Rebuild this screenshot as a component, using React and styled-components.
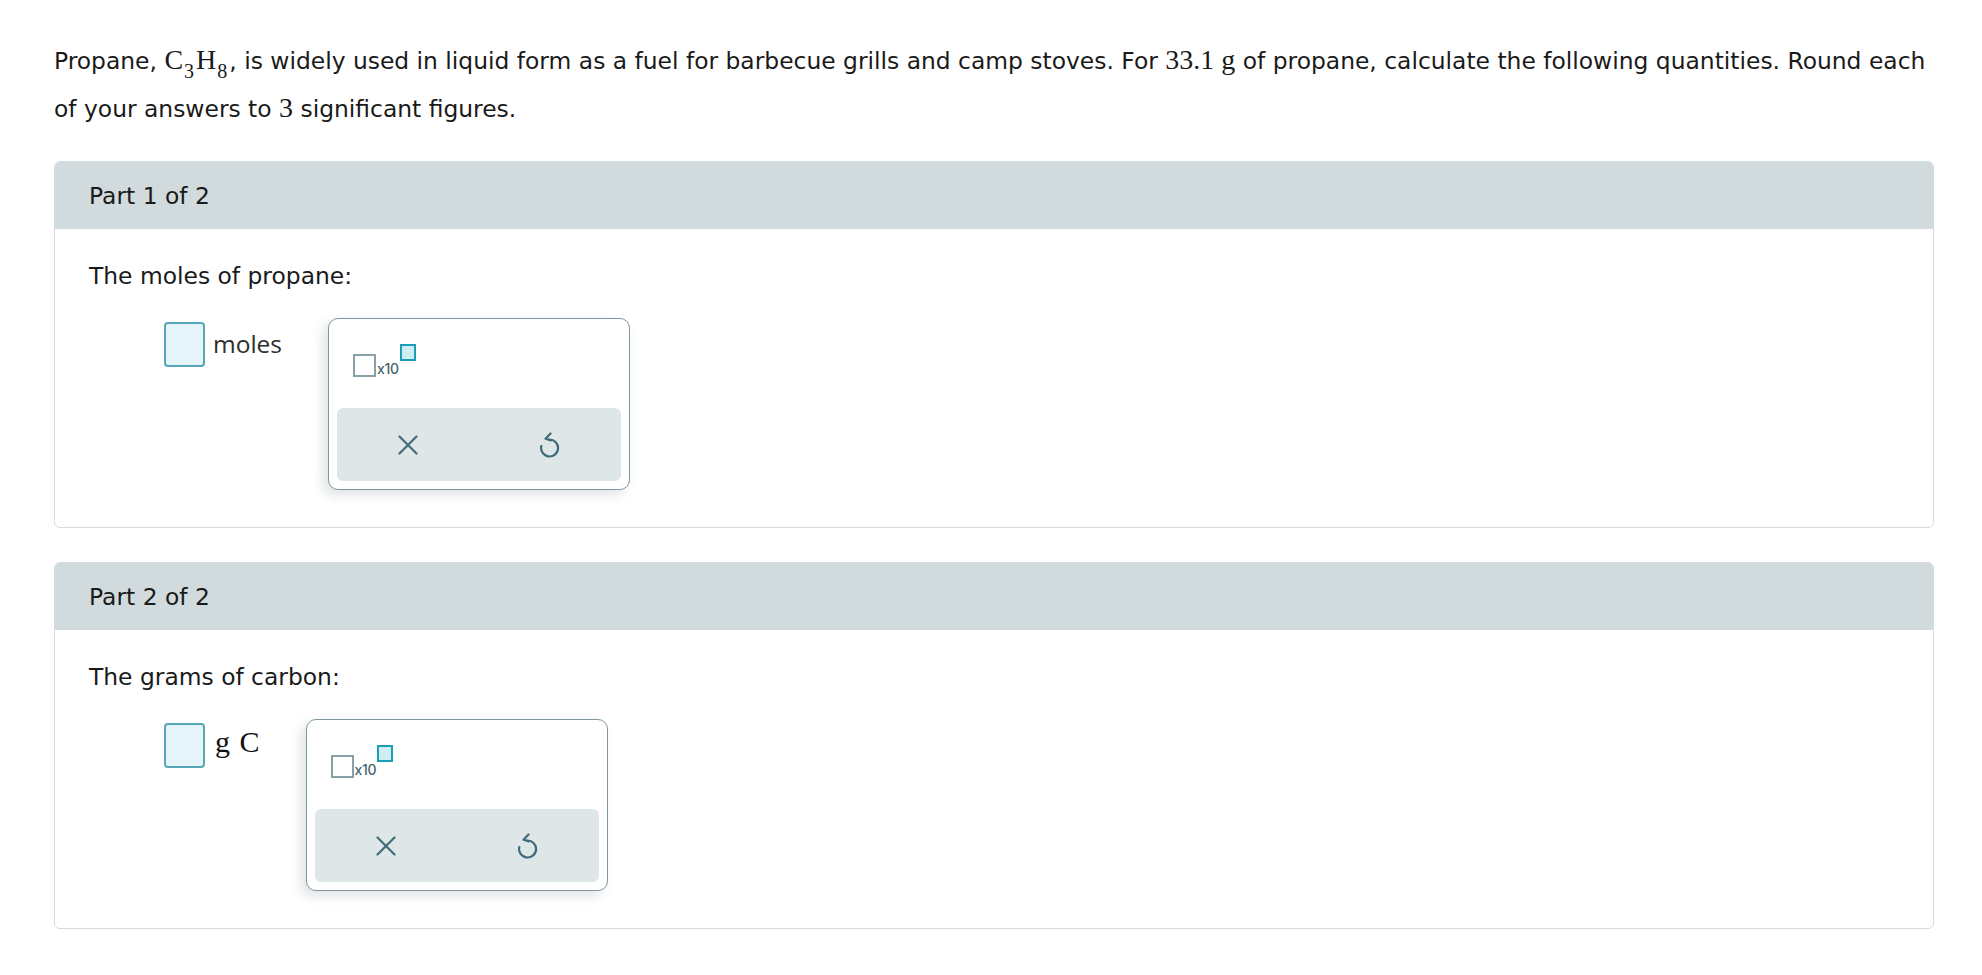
import React from 'react';
import styled, { createGlobalStyle } from 'styled-components';

const GlobalStyle = createGlobalStyle`
  body {
    margin: 0;
    background: #fff;
    font-family: "DejaVu Sans", Verdana, sans-serif;
    color: #1a1a1a;
  }
`;

const Page = styled.main`
  padding: 37px 48px 40px 54px;
`;

const Intro = styled.p`
  margin: 0 0 28px;
  font-size: 23.4px;
  line-height: 48px;
`;

const Math = styled.span`
  font-family: "Liberation Serif", "Times New Roman", serif;
  font-size: 28px;
  line-height: 1;
`;

const Sub = styled.sub`
  margin: 0 2px 0 1px;
  font-size: 20px;
  vertical-align: -9px;
  line-height: 0;
`;

const Card = styled.section`
  border: 1px solid #d3dcdf;
  border-radius: 6px;
  overflow: hidden;
  margin-bottom: 34px;
`;

const CardHeader = styled.header`
  height: 68px;
  line-height: 70px;
  margin-top: -1px;
  padding-left: 34px;
  background: #d1dbde;
  font-size: 23.4px;
`;

const CardBody = styled.div`
  padding: 31px 34px 37px;
`;

const Question = styled.p`
  margin: 0 0 26px;
  font-size: 23.4px;
  line-height: 32px;
`;

const AnswerRow = styled.div`
  display: flex;
  align-items: flex-start;
  margin-left: 75px;
`;

const AnswerBox = styled.div`
  width: 41px;
  height: 45px;
  margin-top: 4px;
  box-sizing: border-box;
  border: 2px solid #55a6b6;
  border-radius: 4px;
  background: #e5f4f8;
`;

const Unit = styled.span`
  margin: ${(p) => (p.$serif ? '8px 0 0 10px' : '11px 0 0 8px')};
  font-family: ${(p) =>
    p.$serif ? '"Liberation Serif", "Times New Roman", serif' : '"Open Sans", sans-serif'};
  font-size: ${(p) => (p.$serif ? '30px' : '24.5px')};
  word-spacing: ${(p) => (p.$serif ? '2px' : '0')};
  line-height: 30px;
  color: ${(p) => (p.$serif ? '#111' : '#2d2d2d')};
`;

const Popup = styled.div`
  width: 302px;
  margin-left: 46px;
  box-sizing: border-box;
  padding: 8px;
  border: 1px solid #7f979f;
  border-radius: 10px;
  background: #fff;
  box-shadow: -5px 5px 12px rgba(60, 80, 90, 0.16);
`;

const PopupTop = styled.div`
  height: 81px;
  padding: 17px 0 0 16px;
  box-sizing: border-box;
`;

const SciButton = styled.div`
  display: inline-flex;
  align-items: flex-end;
  height: 33px;
`;

const BaseSlot = styled.span`
  width: 23px;
  height: 23px;
  box-sizing: border-box;
  border: 2.5px solid #8aa0a7;
`;

const Times = styled.span`
  margin: 0 1px 2px 1px;
  font-family: Inter, "Liberation Sans", sans-serif;
  font-size: 14px;
  font-weight: 500;
  letter-spacing: -0.3px;
  line-height: 13px;
  color: #476570;
`;

const ExpSlot = styled.span`
  align-self: flex-start;
  width: 16px;
  height: 17px;
  box-sizing: border-box;
  border: 2.5px solid #1c9fb6;
  background: #ceeef4;
`;

const Actions = styled.div`
  display: grid;
  grid-template-columns: 1fr 1fr;
  height: 73px;
  border-radius: 6px;
  background: #dfe6e8;
`;

const ActionButton = styled.button`
  display: flex;
  align-items: center;
  justify-content: center;
  border: 0;
  padding: 0;
  background: transparent;
  color: #3f6c79;
  cursor: pointer;
`;

const ClearIcon = () => (
  <svg width="20" height="20" viewBox="0 0 20 20" fill="none" stroke="currentColor" strokeWidth="2.2" strokeLinecap="round">
    <path d="M1.5 1.5l17 17M18.5 1.5l-17 17" />
  </svg>
);

const UndoIcon = () => (
  <svg width="22" height="26" viewBox="0 0 22 26" fill="none" stroke="currentColor" strokeWidth="2.2" strokeLinecap="round" strokeLinejoin="round">
    <path d="M10.5 7.5A8.5 8.5 0 1 1 2.3 14" />
    <path d="M11.5 1.5L6.5 6.8l5.5 1.6" />
  </svg>
);

const AnswerPart = ({ part, question, unit, serif }) => (
  <Card>
    <CardHeader>Part {part} of 2</CardHeader>
    <CardBody>
      <Question>{question}</Question>
      <AnswerRow>
        <AnswerBox />
        <Unit $serif={serif}>{unit}</Unit>
        <Popup>
          <PopupTop>
            <SciButton>
              <BaseSlot />
              <Times>x10</Times>
              <ExpSlot />
            </SciButton>
          </PopupTop>
          <Actions>
            <ActionButton aria-label="clear">
              <ClearIcon />
            </ActionButton>
            <ActionButton aria-label="undo">
              <UndoIcon />
            </ActionButton>
          </Actions>
        </Popup>
      </AnswerRow>
    </CardBody>
  </Card>
);

const App = () => {
  return (
    <Page>
      <GlobalStyle />
      <Intro>
        Propane, <Math>C<Sub>3</Sub>H<Sub>8</Sub></Math>, is widely used in liquid form as a fuel for
        barbecue grills and camp stoves. For <Math>33.1 g</Math> of propane, calculate the following
        quantities. Round each of your answers to <Math>3</Math> significant figures.
      </Intro>
      <AnswerPart part={1} question="The moles of propane:" unit="moles" />
      <AnswerPart part={2} question="The grams of carbon:" unit="g C" serif />
    </Page>
  );
};

export default App;
